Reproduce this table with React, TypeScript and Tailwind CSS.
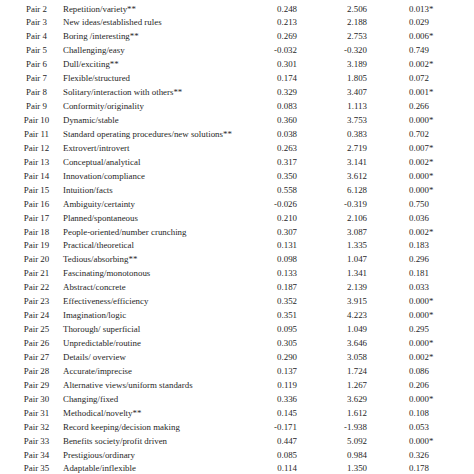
const ROWS: [string, string, string, string, string][] = [
  ["Pair 2", "Repetition/variety**", "0.248", "2.506", "0.013*"],
  ["Pair 3", "New ideas/established rules", "0.213", "2.188", "0.029"],
  ["Pair 4", "Boring /interesting**", "0.269", "2.753", "0.006*"],
  ["Pair 5", "Challenging/easy", "-0.032", "-0.320", "0.749"],
  ["Pair 6", "Dull/exciting**", "0.301", "3.189", "0.002*"],
  ["Pair 7", "Flexible/structured", "0.174", "1.805", "0.072"],
  ["Pair 8", "Solitary/interaction with others**", "0.329", "3.407", "0.001*"],
  ["Pair 9", "Conformity/originality", "0.083", "1.113", "0.266"],
  ["Pair 10", "Dynamic/stable", "0.360", "3.753", "0.000*"],
  ["Pair 11", "Standard operating procedures/new solutions**", "0.038", "0.383", "0.702"],
  ["Pair 12", "Extrovert/introvert", "0.263", "2.719", "0.007*"],
  ["Pair 13", "Conceptual/analytical", "0.317", "3.141", "0.002*"],
  ["Pair 14", "Innovation/compliance", "0.350", "3.612", "0.000*"],
  ["Pair 15", "Intuition/facts", "0.558", "6.128", "0.000*"],
  ["Pair 16", "Ambiguity/certainty", "-0.026", "-0.319", "0.750"],
  ["Pair 17", "Planned/spontaneous", "0.210", "2.106", "0.036"],
  ["Pair 18", "People-oriented/number crunching", "0.307", "3.087", "0.002*"],
  ["Pair 19", "Practical/theoretical", "0.131", "1.335", "0.183"],
  ["Pair 20", "Tedious/absorbing**", "0.098", "1.047", "0.296"],
  ["Pair 21", "Fascinating/monotonous", "0.133", "1.341", "0.181"],
  ["Pair 22", "Abstract/concrete", "0.187", "2.139", "0.033"],
  ["Pair 23", "Effectiveness/efficiency", "0.352", "3.915", "0.000*"],
  ["Pair 24", "Imagination/logic", "0.351", "4.223", "0.000*"],
  ["Pair 25", "Thorough/ superficial", "0.095", "1.049", "0.295"],
  ["Pair 26", "Unpredictable/routine", "0.305", "3.646", "0.000*"],
  ["Pair 27", "Details/ overview", "0.290", "3.058", "0.002*"],
  ["Pair 28", "Accurate/imprecise", "0.137", "1.724", "0.086"],
  ["Pair 29", "Alternative views/uniform standards", "0.119", "1.267", "0.206"],
  ["Pair 30", "Changing/fixed", "0.336", "3.629", "0.000*"],
  ["Pair 31", "Methodical/novelty**", "0.145", "1.612", "0.108"],
  ["Pair 32", "Record keeping/decision making", "-0.171", "-1.938", "0.053"],
  ["Pair 33", "Benefits society/profit driven", "0.447", "5.092", "0.000*"],
  ["Pair 34", "Prestigious/ordinary", "0.085", "0.984", "0.326"],
  ["Pair 35", "Adaptable/inflexible", "0.114", "1.350", "0.178"],
];

export default function App() {
  return (
    <div className="w-[474px] h-[474px] overflow-hidden bg-white pt-[2px] pl-[12px] font-['Liberation_Serif',serif] text-[8.9px] text-[#1f1f1f]">
      {ROWS.map(([pair, desc, a, b, c]) => (
        <div
          key={pair}
          className="grid h-[13.95px] grid-cols-[49px_188px_48px_70px_1fr] items-center leading-none"
        >
          <span className="text-center">{pair}</span>
          <span className="pl-[2px] whitespace-nowrap">{desc}</span>
          <span className="text-right">{a}</span>
          <span className="text-right">{b}</span>
          <span className="pl-[42px]">{c}</span>
        </div>
      ))}
    </div>
  );
}
